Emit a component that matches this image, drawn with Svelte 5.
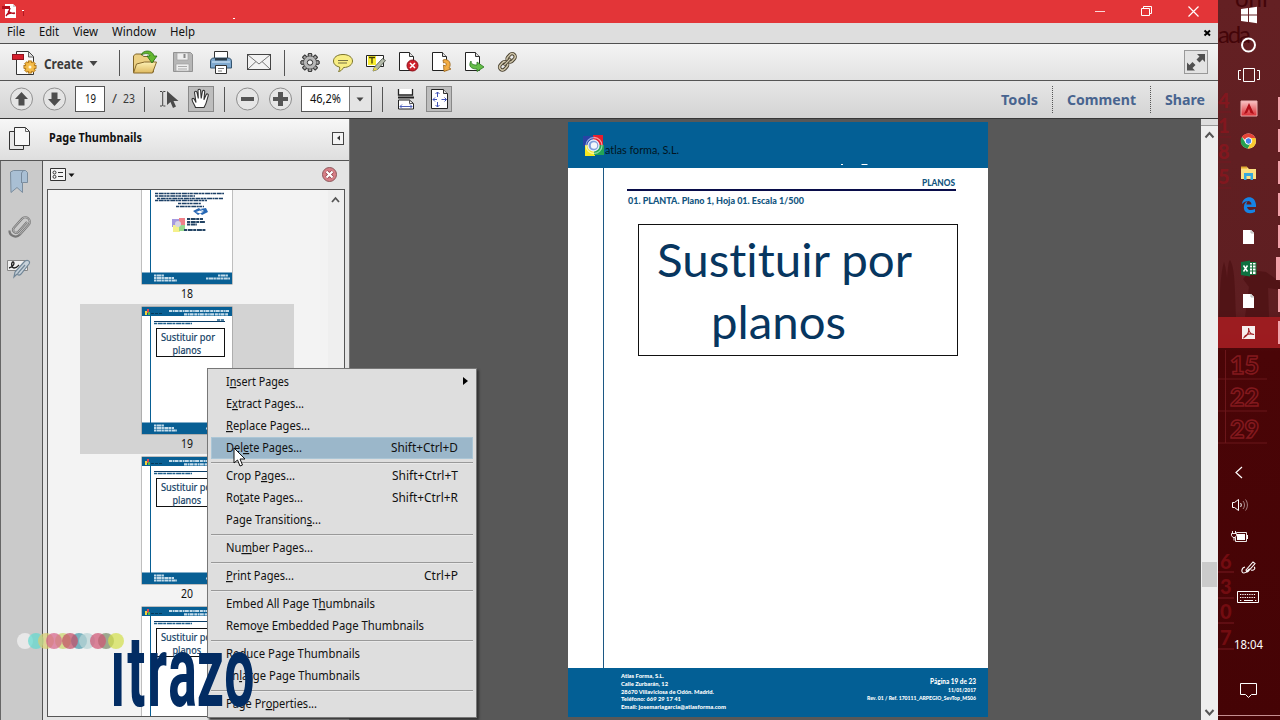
<script>
  const menus = [
    ['File', 18, 7], ['Edit', 20, 39], ['View', 25, 73], ['Window', 44, 112], ['Help', 25, 170]
  ];
  // label before / mnemonic / after, label width, shortcut, shortcut width
  const items = [
    { a: 'I', m: 'n', b: 'sert Pages', w: 63, sub: true },
    { a: 'E', m: 'x', b: 'tract Pages...', w: 78 },
    { a: '', m: 'R', b: 'eplace Pages...', w: 84 },
    { a: 'Del', m: 'e', b: 'te Pages...', w: 76, key: 'Shift+Ctrl+D', kw: 67, hot: true },
    null,
    { a: 'Crop P', m: 'a', b: 'ges...', w: 69, key: 'Shift+Ctrl+T', kw: 66 },
    { a: 'Ro', m: 't', b: 'ate Pages...', w: 77, key: 'Shift+Ctrl+R', kw: 66 },
    { a: 'Page Transition', m: 's', b: '...', w: 95 },
    null,
    { a: 'Nu', m: 'm', b: 'ber Pages...', w: 87 },
    null,
    { a: '', m: 'P', b: 'rint Pages...', w: 68, key: 'Ctrl+P', kw: 34 },
    null,
    { a: 'Embed All Page T', m: 'h', b: 'umbnails', w: 149 },
    { a: 'Remo', m: 'v', b: 'e Embedded Page Thumbnails', w: 198 },
    null,
    { a: 'Reduce Pa', m: 'g', b: 'e Thumbnails', w: 134 },
    { a: 'En', m: 'l', b: 'arge Page Thumbnails', w: 134 },
    null,
    { a: 'Page Pr', m: 'o', b: 'perties...', w: 91 }
  ];
  const dots = [
    [25, '#f4f4f4'], [63, '#c9d66b'], [36, '#62d9cf'], [46, '#d8cd70'], [54, '#d5648a'], [79, '#4a9aaa'],
    [87, '#b8d4d6'], [70, '#c44e68'], [106, '#7b8a68'], [98, '#cf5675'], [116, '#d2df4e']
  ];
  const gearTeeth = [0, 45, 90, 135, 180, 225, 270, 315];
  const ticks = [97, 129, 161, 193, 225, 257, 289, 321];
</script>

{#snippet txt(s, w, h, base, size, cls)}
  <svg class="txt {cls}" width={w} height={h}><text x="0" y={base} font-size={size} textLength={w} lengthAdjust="spacingAndGlyphs">{s}</text></svg>
{/snippet}

{#snippet thumb(n, full)}
  <div class="thumb">
    <svg width="90" height="127" viewBox="0 0 90 127">
      <rect width="90" height="127" fill="#fff" />
      {#if full}
        <rect width="90" height="9" fill="#085f94" />
        <rect x="3" y="4" width="2" height="4" fill="#f0d23c" /><rect x="5" y="2" width="2" height="4" fill="#de4853" /><rect x="6" y="5" width="2" height="3" fill="#54b848" />
        <path d="M9 6.5h12" stroke="#033a5c" stroke-dasharray="3 1" />
        <path d="M27 4h60M42 7.300h44" stroke="#c3dbe9" stroke-width="2.200" stroke-dasharray="3 .6 1.5 .4 4 .8" />
        <path d="M12 14.5h71" stroke="#0a3c66" /><path d="M75 13h7M12 16.500h38" stroke="#1a5d8b" stroke-width="1.500" stroke-dasharray="3 .7 5 .5" />
        <rect x="14.500" y="21.500" width="68" height="28" fill="#fff" stroke="#111" />
        <g fill="#103c63" stroke="#103c63" stroke-width=".2" font-family="'Noto Sans'" font-size="10.5">
          <text x="19" y="33.500" textLength="54" lengthAdjust="spacingAndGlyphs">Sustituir por</text>
          <text x="30.500" y="46.500" textLength="28.500" lengthAdjust="spacingAndGlyphs">planos</text>
        </g>
      {:else}
        <path d="M13 36.500h69M13 39h40M15 41.500h66M13 43.500h52M36 46.500h23M34 49.500h28" stroke="#1b3f66" stroke-width="1.700" stroke-dasharray="3 .7 5 .5 2 .4" />
        <path d="M51 54l6-3 4 4-5 3z" fill="#2a68b4" /><path d="M58 52l6-1 2 4-6 3-2-2 4-2z" fill="#2768b5" /><path d="M54 55l4-1.500 3 1.500-3 1.500z" fill="#fff" />
        <rect x="30" y="62" width="7" height="8" fill="#a59adf" /><rect x="37" y="61" width="6" height="7" fill="#ef8189" /><rect x="31" y="68" width="7" height="7" fill="#f5f08b" /><rect x="37" y="68" width="6" height="6" fill="#97d98e" />
        <circle cx="36" cy="67" r="3" fill="#d8d5e5" />
        <path d="M45 62h16M45 65h18M45 67.500h10M42 73h22" stroke="#244464" stroke-width="2" stroke-dasharray="3 .7 5 .5" />
      {/if}
      <path d="M8.500 {full ? 9 : 0}V116" stroke="#085f94" />
      <rect y="115.500" width="90" height="11.500" fill="#085f94" />
      <path d="M12 118.500h10M12 121h20M12 123.500h23M76 118.500h10M64 121.500h24" stroke="#c3dbe9" stroke-width="1.800" stroke-dasharray="2.500 .5 4 .4" />
    </svg>
    <div class="num">{@render txt(n, 12, 20, 14, 13, '')}</div>
  </div>
{/snippet}

<div class="screen">
  <div class="app">
    <header class="title">
      <svg width="240" height="23" viewBox="0 0 240 23">
        <path d="M5 4h8l3 3v11H5z" fill="#fff" /><path d="M13 4v3h3z" fill="#cfd0d2" />
        <rect x="2" y="6" width="8" height="3" fill="#b4101c" />
        <path d="M10 8c-.4 3-2 6-4 8M8 11c2 2 4 3 7 2M6.500 15c2-2 5-2.500 8-1.500" stroke="#b20c1a" stroke-width="1.400" fill="none" />
        <path d="M23.500 11v5" stroke="#b31824" /><path d="M22 10.500h2M233 18.500h2" stroke="#fff" />
      </svg>
      <svg width="138" height="23" viewBox="1080 0 138 23" fill="none" stroke="#fff">
        <path d="M1095 11.500h10" opacity=".8" /><path d="M1141.500 8.500h8v7h-8zM1143.500 8v-1.500h8v7h-2" /><path d="M1188.500 6.500l10 10M1198.500 6.500l-10 10" stroke-width="1.200" />
      </svg>
    </header>

    <nav class="menubar">
      <div class="menus">
        {#each menus as [name, w, x], i}
          <span style="margin-left:{i ? x - menus[i - 1][2] - menus[i - 1][1] : x}px">{@render txt(name, w, 20, 13.400, 12.500, '')}</span>
        {/each}
      </div>
      <svg width="16" height="20" viewBox="1202 23 16 20"><path d="M1204.500 30.500l5.500 5M1210 30.500l-5.500 5" stroke="#000" stroke-width="2" /></svg>
    </nav>

    <div class="bar bar1">
      <svg width="44" height="36" viewBox="0 44 44 36">
        <path d="M16.500 51.500h12l5 5v18h-17z" fill="#fbfbfb" stroke="#333" /><path d="M28.500 52v5h5" fill="#ddd" stroke="#444" stroke-width=".8" />
        <rect x="12.500" y="54.500" width="11" height="5" fill="#d6202d" stroke="#8f1420" />
        <g fill="#f0b23c" stroke="#a56b13" stroke-width=".6">{#each gearTeeth as r}<rect x="28.500" y="61" width="3" height="12" transform="rotate({r} 30 67)" />{/each}</g>
        <circle cx="30" cy="67" r="4.200" fill="#f4bc4a" /><circle cx="30" cy="67" r="1.500" fill="#fff5d8" />
      </svg>
      {@render txt('Create', 39, 36, 24.500, 13.500, 'bold grey')}
      <svg width="43" height="36" viewBox="83 44 43 36"><path d="M89.500 61h8l-4 5z" fill="#444" /><path d="M119.500 50v26" stroke="#555" /></svg>
      <svg width="38" height="36" viewBox="126 44 38 36">
        <defs><linearGradient id="fold" x2="0" y2="1"><stop stop-color="#fdf0b4" /><stop offset="1" stop-color="#dfba60" /></linearGradient></defs>
        <path d="M133.500 72V56l2-2h6l2 2.500h10V72z" fill="#ecd083" stroke="#7f6429" /><path d="M133.500 73l3-9 8-2h12l-4 11z" fill="url(#fold)" stroke="#86692c" />
        <path d="M141 55c2-5 11-6 13 1h3l-5 7-5-7h3c-1-3-5-3-9-1z" fill="#62b72f" stroke="#266b13" stroke-width=".8" />
      </svg>
      <svg width="38" height="36" viewBox="164 44 38 36">
        <path d="M173.500 52.500h17l2 2v17h-19z" fill="#b6b6b6" stroke="#929292" /><path d="M177 53h11v7h-11zM176 64h13v7h-13z" fill="#eee" stroke="#a0a0a0" stroke-width=".7" /><path d="M184.500 54v4" stroke="#888" stroke-width="2" /><path d="M178 66.500h9M178 69h9" stroke="#aaa" />
      </svg>
      <svg width="38" height="36" viewBox="202 44 38 36">
        <path d="M214.500 51.500h13v8h-13z" fill="#fff" stroke="#333" />
        <path d="M210.500 68v-6c0-3 1-4 4-4h13c3 0 4 1 4 4v6z" fill="#7fa9cf" stroke="#34546f" /><path d="M212 62h18" stroke="#bdd7ec" stroke-width="1.500" /><path d="M215 58h12v2.500h-12z" fill="#2c3c49" />
        <path d="M215.500 65.500h11v8h-11z" fill="#fff" stroke="#333" /><path d="M218 68.500h6M218 71h4" stroke="#777" />
      </svg>
      <svg width="54" height="36" viewBox="240 44 54 36">
        <rect x="247.500" y="54.500" width="23" height="15" fill="#f2f2f2" stroke="#444" /><path d="M248 55l11 9 11-9M248 69l8-7.500M270 69l-8-7.500" fill="none" stroke="#777" /><path d="M284.500 50v26" stroke="#555" />
      </svg>
      <svg width="33" height="36" viewBox="294 44 33 36">
        <g fill="#a7a7a7" stroke="#3a3a3a" stroke-width="1">{#each gearTeeth as r}<rect x="308.300" y="53.500" width="3.400" height="18" rx=".5" transform="rotate({r} 310 62.500)" />{/each}</g>
        <circle cx="310" cy="62.500" r="6.500" fill="#bbb" stroke="#4a4a4a" stroke-width=".7" /><circle cx="310" cy="62.500" r="5.300" fill="#b8b8b8" /><circle cx="310" cy="62.500" r="2.700" fill="#f4f4f4" stroke="#333" />
      </svg>
      <svg width="33" height="36" viewBox="327 44 33 36"><path d="M343 54.500c6 0 9.500 3 9.500 6.500s-3.500 6.500-9 6.500c-1 2-3 4-5 4 1-1.500 1.500-3 1-4.500-4-1-6-3-6-6 0-3.500 3.500-6.500 9.500-6.500z" fill="#f8ee84" stroke="#7c752c" /><path d="M338 60.500h10M338 63h9" stroke="#767143" /></svg>
      <svg width="33" height="36" viewBox="360 44 33 36">
        <path d="M366.500 55.500h17v11h-17z" fill="#fff" stroke="#222" /><rect x="368" y="56" width="8" height="9" fill="#f9ee30" /><path d="M369 57.500h6M372 57.500v6" stroke="#433c00" stroke-width="1.300" />
        <path d="M373 71l1.500-4 8-8.500 3 2-8 9z" fill="#b3b9a9" stroke="#444e42" stroke-width=".8" /><path d="M373 71l1.500-4 3 2.500z" fill="#ead747" />
      </svg>
      <svg width="33" height="36" viewBox="393 44 33 36">
        <path d="M399.500 52.500h10l4 4v14h-14z" fill="#fff" stroke="#222" /><path d="M409.500 52.500v4h4" fill="#ddd" stroke="#333" /><circle cx="412.500" cy="65.500" r="5.500" fill="#d0202b" stroke="#8c141d" /><path d="M410 63l5 5M415 63l-5 5" stroke="#fff" stroke-width="1.500" />
      </svg>
      <svg width="33" height="36" viewBox="426 44 33 36">
        <path d="M432.500 52.500h10l4 4v14h-14z" fill="#fff" stroke="#222" /><path d="M442.500 52.500v4h4" fill="#ddd" stroke="#333" /><path d="M443 60c6-2 9 4 6 8l2 1-7 2.500-.5-6.500 2 1c1.500-2 0-4-2-3z" fill="#f3ad43" stroke="#9a641a" stroke-width=".8" />
      </svg>
      <svg width="33" height="36" viewBox="459 44 33 36">
        <path d="M465.500 52.500h10l4 4v14h-14z" fill="#fff" stroke="#222" /><path d="M475.500 52.500v4h4" fill="#ddd" stroke="#333" /><path d="M471 61c0 3 2 4 6 4v-3l7 5-7 4.500v-2.500c-6 0-9-3-6-8z" fill="#64bd48" stroke="#287520" stroke-width=".8" />
      </svg>
      <svg width="33" height="36" viewBox="492 44 33 36">
        <g fill="none" transform="rotate(-47 507.500 62)"><g stroke="#49412f" stroke-width="3.400"><rect x="497.500" y="58.800" width="9" height="6" rx="3" /><rect x="508.500" y="58.800" width="9" height="6" rx="3" /></g><g stroke="#cfc5aa" stroke-width="1.500"><rect x="497.500" y="58.800" width="9" height="6" rx="3" /><rect x="508.500" y="58.800" width="9" height="6" rx="3" /></g><path d="M502.500 61.800h10" stroke="#4d4533" stroke-width="3" /><path d="M503 61.800h9" stroke="#d8cdb0" stroke-width="1.200" /></g>
      </svg>
      <svg class="push" width="40" height="36" viewBox="1178 44 40 36">
        <rect x="1184.500" y="50.500" width="23" height="23" fill="#e3e3e3" stroke="#999" /><path d="M1197 54h8v8l-2.500-2.500-3 3-3-3 3-3zM1187 70.500v-8l2.500 2.500 3-3 3 3-3 3 2.500 2.500z" fill="#505050" />
      </svg>
    </div>

    <div class="bar bar2">
      <svg width="75" height="35" viewBox="0 82 75 35">
        <g fill="#e4e4e4" stroke="#909090"><circle cx="21.500" cy="99" r="11" /><circle cx="54.500" cy="99" r="11" /></g>
        <path d="M21.500 92l6.500 7h-3.500v6.500h-6V99H15zM54.500 106l-6.500-7h3.500v-6.500h6V99H61z" fill="#4d4d4d" />
      </svg>
      <div class="field">{@render txt('19', 11, 24, 16.400, 12, '')}</div>
      <div class="pages">{@render txt('/', 5, 35, 21.400, 12, 'grey')}{@render txt('23', 12, 35, 21.400, 12.500, 'grey')}</div>
      <svg width="53" height="35" viewBox="135 82 53 35"><path d="M144.500 87v25" stroke="#555" /><path d="M160 91.500h2l.7.700.7-.7h2M162.700 92v13M160 106h2l.7-.7.7.7h2" stroke="#444" fill="none" /><path d="M167 91v14l3.500-3 2.500 6 3-1.500-2.500-5.500h5z" fill="#4b4b4b" /></svg>
      <div class="tool"><svg width="26" height="26" viewBox="187.500 86 26 26"><path d="M195 107.500c-1-3-3-5-3.500-8 0-1.500 2-1.500 2.500 0l1.500 3-1.500-10c0-1.700 2.200-1.700 2.500 0l1.300 6-.3-8c0-1.700 2.500-1.700 2.600 0l.6 8 1.200-7c.3-1.700 2.500-1.400 2.300.2l-.8 8 2.200-5c.7-1.500 2.600-.8 2.200.7l-2 7c-.5 2-1.500 3.500-2.300 5.100z" fill="#fff" stroke="#333" stroke-width="1.100" /></svg></div>
      <svg width="87" height="35" viewBox="214 82 87 35"><path d="M224.500 87v25" stroke="#555" /><g fill="#e6e6e6" stroke="#8c8c8c"><circle cx="247.500" cy="99" r="11" /><circle cx="280.500" cy="99" r="11" /></g><path d="M241 97h13v4h-13zM273 97h5v-5h5v5h5v4h-5v5h-5v-5h-5z" fill="#555" /></svg>
      <div class="combo">{@render txt('46,2%', 31, 24, 16.400, 12, '')}<svg width="22" height="24"><path d="M0.500 0v24" stroke="#777" /><path d="M7.500 10.500h7l-3.500 4z" fill="#444" /></svg></div>
      <svg width="54" height="35" viewBox="372 82 54 35"><path d="M382.500 87v25" stroke="#555" /><path d="M398.500 89v6h14v-6" fill="#fff" stroke="#222" stroke-width="1.300" /><path d="M398 97.500h16" stroke="#222" stroke-width="2" /><path d="M398.500 109v-9h11l4 3.500v5.500z" fill="#fff" stroke="#222" /><path d="M409.500 100v3.500h4" fill="none" stroke="#555" /><path d="M400 106.500h12M402 104.500l-2 2 2 2M410 104.500l2 2-2 2" fill="none" stroke="#4e60ba" /></svg>
      <div class="tool"><svg width="26" height="26" viewBox="426 86 26 26"><path d="M431.500 89.500h12l4 4v15h-16z" fill="#fff" stroke="#222" /><path d="M443.500 89.500v4h4" fill="#ddd" stroke="#333" /><path d="M437.500 92v5M437.500 102v5M433 99.500h4M441.500 99.500h5M435.500 94l2-2 2 2M435.500 105l2 2 2-2M435 97.500l-2 2 2 2M444.500 97.500l2 2-2 2" stroke="#4052b8" fill="none" /></svg></div>
      <div class="links">
        {@render txt('Tools', 37, 35, 23, 14.500, 'bold blue')}<i></i>
        {@render txt('Comment', 69, 35, 23, 14.500, 'bold blue')}<i></i>
        {@render txt('Share', 40, 35, 23, 14.500, 'bold blue')}
      </div>
    </div>

    <div class="body">
      <aside class="panel">
        <div class="phead">
          <svg width="49" height="41" viewBox="0 119 49 41"><path d="M9.500 131.500h14v18h-14z" fill="#e7e7e7" stroke="#333" /><path d="M14.500 127.500h11l4 4v14h-15z" fill="#f8f8f8" stroke="#333" /><path d="M25.500 127.500v4h4" fill="none" stroke="#666" /></svg>
          {@render txt('Page Thumbnails', 93, 41, 23.400, 12.500, 'bold')}
          <svg class="push" width="20" height="41" viewBox="329 119 20 41"><rect x="332.500" y="132.500" width="11" height="12" fill="#f4f4f4" stroke="#444" /><path d="M340 135.500v5l-3-2.500z" fill="#333" /></svg>
        </div>
        <div class="pbody">
          <div class="strip">
            <svg width="42" height="130" viewBox="0 161 42 130">
              <path d="M10.500 172l3-1.500h12l2 2v10h-5v10l-5.500-5-6 5z" fill="#a9bfd4" stroke="#7b8d9e" /><path d="M21.500 183v-10l2-2.500" stroke="#76899c" fill="none" />
              <g fill="none" transform="translate(19.500 226) rotate(42)"><path d="M3-8V5a3 3 0 0 1-6 0V-7a4.500 4.500 0 0 1 9 0V6a6 6 0 0 1-10.500 4" stroke="#777" stroke-width="2.200" /><path d="M3-8V5a3 3 0 0 1-6 0V-7a4.500 4.500 0 0 1 9 0V6" stroke="#c9c9c9" stroke-width=".7" /></g>
              <path d="M7.500 260.500h20v10h-20z" fill="#f0f0f0" stroke="#888" /><path d="M9 268c5-1 6-6 4-6s-2 6 1 6 4-2 5-3" stroke="#222" stroke-width="1.300" fill="none" /><path d="M17 274l-3 3 1-5 9-10c3-3 7-1 5 2l-8 10c-2 2-4 1-3-1l7-8" fill="#c8d2da" stroke="#718697" stroke-width="1.200" />
            </svg>
          </div>
          <div class="thumbs">
            <div class="ptools">
              <svg width="32" height="28" viewBox="47 161 32 28"><path d="M50.500 168.500h15v12h-15z" fill="#f5f5f5" stroke="#333" /><g fill="none" stroke="#333"><circle cx="54.500" cy="172.500" r="1.500" /><circle cx="54.500" cy="176.800" r="1.500" /><path d="M58 172.500h5M58 176.500h5" /></g><path d="M68.500 173.500h6l-3 3.500z" fill="#111" /></svg>
              <svg width="28" height="28" viewBox="317 161 28 28"><circle cx="329.500" cy="174.500" r="7" fill="#d77f86" stroke="#8c595d" /><path d="M326.500 171.500l6 6M332.500 171.500l-6 6" stroke="#8b3a42" stroke-width="3.600" /><path d="M326.500 171.500l6 6M332.500 171.500l-6 6" stroke="#fff" stroke-width="2.200" /></svg>
            </div>
            <div class="list">
              <div class="pagescol">
                <div class="slot">{@render thumb('18', false)}</div>
                <div class="slot sel">{@render thumb('19', true)}</div>
                <div class="slot">{@render thumb('20', true)}</div>
                <div class="slot last">{@render thumb('21', true)}</div>
              </div>
              <div class="lscroll"><svg width="16" height="18"><path d="M4 12l3.500-4 3.500 4" fill="none" stroke="#555" stroke-width="1.800" /></svg></div>
            </div>
          </div>
        </div>
      </aside>

      <main class="canvas">
        <article class="page">
          <header>
            <svg width="420" height="46" viewBox="568 122 420 46">
              <rect x="583" y="136" width="11" height="10" fill="#2843a5" /><rect x="593" y="135" width="10" height="10" fill="#e31e2e" /><rect x="585" y="145" width="10" height="11" fill="#f8e71f" /><rect x="594" y="145" width="10" height="10" fill="#23a455" />
              <g fill="none" stroke-width="1.300"><path d="M586 145.500a8 8 0 0 1 8-8" stroke="#8fa4de" /><path d="M594 137.500a8 8 0 0 1 8 8" stroke="#f6a2a2" /><path d="M602 145.500a8 8 0 0 1-8 8" stroke="#8cd7a0" /><path d="M594 153.500a8 8 0 0 1-8-8" stroke="#fbf6a0" /></g>
              <circle cx="593.500" cy="145.500" r="5.500" fill="#7f9edb" stroke="#e8effa" stroke-width="1.300" /><circle cx="594" cy="145.500" r="3.200" fill="#f2f5fb" />
              <text x="605" y="154" font-family="Lato" font-size="11" fill="#021521" textLength="74" lengthAdjust="spacingAndGlyphs">atlas forma, S.L.</text>
              <path d="M841 164.500h2M861.500 164.500h6" stroke="#fff" />
            </svg>
          </header>
          <div class="sheet">
            <div class="rail"></div>
            <div class="content">
              <div class="sect">{@render txt('PLANOS', 33, 21, 18.400, 9, 'cal bold')}</div>
              <div class="sub">{@render txt('01. PLANTA. Plano 1, Hoja 01. Escala 1/500', 176, 20, 13.400, 9.500, 'cal bold')}</div>
              <div class="box">
                <div class="big">{@render txt('Sustituir por', 255, 62, 52, 46, 'big')}</div>
                <div class="big two">{@render txt('planos', 135, 62, 52, 46, 'big')}</div>
              </div>
            </div>
          </div>
          <footer>
            <div>
              {@render txt('Atlas Forma, S.L.', 43, 7.800, 6, 6.300, 'foot')}
              {@render txt('Calle Zurbarán, 12', 47, 7.800, 6, 6.300, 'foot')}
              {@render txt('28670 Villaviciosa de Odón. Madrid.', 93, 7.800, 6, 6.300, 'foot')}
              {@render txt('Teléfono: 669 29 17 41', 60, 7.800, 6, 6.300, 'foot')}
              {@render txt('Email: josemariagarcia@atlasforma.com', 105, 7.800, 6, 6.300, 'foot')}
            </div>
            <div class="fr">
              {@render txt('Página 19 de 23', 46, 9, 7, 7, 'foot')}
              {@render txt('11/01/2017', 28, 7.500, 6, 6, 'foot')}
              {@render txt('Rev. 01 / Ref. 170111_ARPEGIO_SevTop_MS06', 109, 8, 5.800, 5.800, 'foot')}
            </div>
          </footer>
        </article>
      </main>
      <div class="vscroll">
        <svg width="17" height="601" viewBox="1201 119 17 601"><path d="M1201 119h17v6h-17z" fill="#dedede" /><path d="M1201 125.500h17" stroke="#999" /><path d="M1205.500 137.500l4-4.500 4 4.500M1205.500 710l4 4.500 4-4.500" fill="none" stroke="#555" stroke-width="2" /><rect x="1202" y="562" width="15" height="25" fill="#cbcbcb" /></svg>
      </div>
    </div>
  </div>

  <aside class="taskbar">
    <svg class="wall" width="62" height="720" viewBox="1218 0 62 720">
      <g fill="#430509" font-family="Lato" font-size="24"><text x="1235" y="7">oni</text><text x="1218" y="43" textLength="33">ada</text></g>
      <g fill="#94131d" opacity=".65" font-family="Lato" font-weight="900" font-size="20"><text x="1218" y="108">4</text><text x="1218" y="133">1</text><text x="1218" y="159">8</text><text x="1218" y="184">5</text></g>
      <path d="M1218 112h13M1218 137h13M1218 162h13M1218 188h13" stroke="#751920" />
      <path d="M1219 317c1-30 2-45 5-55 4 12 4 30 5 55zM1226 317c0-30 2-65 5-55 4 8 4 30 5 55zM1245 317l4-30-6-8 8-9 15 2 14 10v8l-12-2 1 29z" fill="#4c0f13" opacity=".7" />
      <g fill="none" stroke="#8d1d22" stroke-width="1.500" opacity=".85" font-family="Lato" font-weight="900" font-size="25"><text x="1230" y="374">15</text><text x="1230" y="406">22</text><text x="1230" y="438">29</text></g>
      <path d="M1225.500 350v93M1218 379h49M1218 411h49M1218 443h49" stroke="#822228" opacity=".6" />
      <g fill="#8a1117" opacity=".65" font-family="Lato" font-weight="900" font-size="20"><text x="1220" y="569">6</text><text x="1220" y="594">3</text><text x="1220" y="619">0</text><text x="1220" y="645">7</text></g>
      <path d="M1218 572h16M1218 598h16M1218 623h16M1218 649h16" stroke="#781820" />
      <rect x="1218" y="317" width="62" height="31" fill="#a01d21" opacity=".94" />
      <path d="M1218 715.500h62" stroke="#c58e90" />
      {#each ticks as y}<rect x={y === 257 ? 1276 : 1278} {y} width="4" height="23" fill="#f2a2aa" />{/each}
    </svg>
    <svg width="62" height="30" viewBox="1218 0 62 30"><path d="M1241 9l7-1v6.500h-7zM1249 8l8-1.200v7.700h-8zM1241 15.500h7V22l-7-1zM1249 15.500h8v7.700l-8-1.200z" fill="#fff" /></svg>
    <svg width="62" height="30" viewBox="1218 30 62 30"><circle cx="1248.500" cy="45" r="6.500" fill="none" stroke="#fff" stroke-width="2" /></svg>
    <svg width="62" height="33" viewBox="1218 60 62 33" fill="none" stroke="#fff"><path d="M1243.500 68.500h11v13h-11zM1241 70.500h-2.500v9h2.500M1257 70.500h2.500v9h-2.500" /></svg>
    <svg width="62" height="32" viewBox="1218 93 62 32"><defs><linearGradient id="ac" x2="0" y2="1"><stop stop-color="#fbc4c5" /><stop offset="1" stop-color="#d92b31" /></linearGradient></defs><path d="M1241 101h16v15h-16z" fill="url(#ac)" stroke="#eab0b0" /><path d="M1244 114l5-11 5 11-3.500-1-1.500-4-2 4z" fill="#b00f18" /></svg>
    <svg width="62" height="32" viewBox="1218 125 62 32"><circle cx="1248.500" cy="141" r="7.500" fill="#fff" /><path d="M1248.500 133.500a7.500 7.500 0 0 1 6.800 4.500h-6.800a3.500 3.500 0 0 0-3.200 2l-3.500-3a7.500 7.500 0 0 1 6.700-3.500z" fill="#e54436" /><path d="M1241.800 137a7.500 7.500 0 0 0 6 11.500l3-5a3.500 3.500 0 0 1-5.300-1z" fill="#26a150" /><path d="M1255.300 138a7.500 7.500 0 0 1-7.500 10.500l3.300-6a3.500 3.500 0 0 0-.6-4.500z" fill="#f9ca2f" /><circle cx="1248.500" cy="141" r="3.300" fill="#4285ef" stroke="#fff" /></svg>
    <svg width="62" height="32" viewBox="1218 157 62 32"><path d="M1241 167h6l2 2h7v10h-15z" fill="#fce082" /><path d="M1241 166.500h6v2h-6z" fill="#e3ad32" /><path d="M1244 173h9v7h-2.500v-4h-4v4h-2.500z" fill="#36a9de" /></svg>
    <svg width="62" height="32" viewBox="1218 189 62 32"><path d="M1242 204c1-8 13-10 14 1v2h-9c1 4 5 3.500 8 2v3c-7 3-12 0-11-6 .5-3 2-4 4-5-1 1-1.500 2-1.500 3.500h5c0-5-6-4.500-9.500-.5z" fill="#1683e4" /></svg>
    <svg width="62" height="32" viewBox="1218 221 62 32"><path d="M1243 230h8l3 3v11h-11z" fill="#fff" /><path d="M1251 230v3h3" stroke="#bbb" fill="#ddd" /></svg>
    <svg width="62" height="32" viewBox="1218 253 62 32"><path d="M1249 262.500h7v12h-7z" fill="#fff" stroke="#19713c" /><path d="M1249 265h7M1249 268h7M1249 271h7M1252.500 263v11" stroke="#19713c" /><path d="M1241 262l9-1.500v16l-9-1.500z" fill="#0e7140" /><path d="M1243.500 265.500l4 6M1247.500 265.500l-4 6" stroke="#fff" stroke-width="1.500" /></svg>
    <svg width="62" height="32" viewBox="1218 285 62 32"><path d="M1243 294h8l3 3v11h-11z" fill="#fff" /><path d="M1251 294v3h3" stroke="#bbb" fill="#ddd" /></svg>
    <svg width="62" height="32" viewBox="1218 317 62 32"><path d="M1242 326h13v13h-13z" fill="#f7eeee" /><path d="M1248.500 328c1 5-2 8-4.500 9.500 1-3 6-4.500 10-3-3 0-5-2.500-5.500-6.500z" fill="none" stroke="#a01d22" stroke-width="1.100" /></svg>
    <div class="gap"></div>
    <svg width="62" height="32" viewBox="1218 457 62 32"><path d="M1242 467l-6 5.500 6 5.500" fill="none" stroke="#fff" stroke-width="1.200" /></svg>
    <svg width="62" height="32" viewBox="1218 489 62 32" fill="none" stroke="#fff"><path d="M1232.500 502.500h2l4-3v11l-4-3h-2z" /><path d="M1240.500 503c1 1 1 3 0 4" /><path d="M1243 501c2 2 2 6 0 8M1245.500 499.500c2.500 3 2.500 8 0 11" opacity=".5" /></svg>
    <svg width="62" height="32" viewBox="1218 521 62 32"><path d="M1235.500 532.500h11v9h-11z" fill="none" stroke="#fff" stroke-width=".9" /><path d="M1237 534h8v6h-8z" fill="#fff" /><path d="M1247.500 535v4" stroke="#fff" /><path d="M1230.500 532.500h6v4l-2 1.500h-2l-2-1.500z" fill="#4c0508" /><path d="M1232.500 531v2.500M1235.500 531v2.500M1231.500 533.500h5v2l-1.500 2h-2l-1.500-2zM1234 537.500v3" stroke="#fff" stroke-width=".9" fill="none" /></svg>
    <svg width="62" height="30" viewBox="1218 553 62 30" fill="none" stroke="#fff"><path d="M1247 572l-1-2 7-8 2 1.500-7 8zM1245 567c-4 1-4 6-1 6 4 0 3-5 7-4M1251 570c3 1 5-2 3-3" stroke-width="1.100" /></svg>
    <svg width="62" height="30" viewBox="1218 583 62 30" fill="none" stroke="#fff"><path d="M1237.500 591.500h21v11h-21z" /><path d="M1240 594.500h16M1240 597.500h16M1240 600.500h2M1255 600.500h2" stroke-dasharray="1.300 1" /><path d="M1244 600.500h9" /></svg>
    <div class="clock">{@render txt('18:04', 29, 64, 36, 12.500, 'white')}</div>
    <svg width="62" height="43" viewBox="1218 677 62 43"><path d="M1240.500 683.500h16v11h-5l-3 3-3-3h-5z" fill="none" stroke="#fff" /></svg>
  </aside>

  <div class="ctx">
    {#each items as it}
      {#if it}
        <div class="mi" class:hot={it.hot}>
          <svg class="txt" width={it.w} height="22"><text x="0" y="15" font-size="12" textLength={it.w} lengthAdjust="spacingAndGlyphs">{it.a}<tspan text-decoration="underline">{it.m}</tspan>{it.b}</text></svg>
          {#if it.key}{@render txt(it.key, it.kw, 22, 15, 12, '')}{/if}
          {#if it.sub}<svg class="arrow" width="6" height="22"><path d="M0 6v8l5-4z" fill="#000" /></svg>{/if}
        </div>
      {:else}
        <div class="sep"></div>
      {/if}
    {/each}
  </div>

  <svg class="cursor" width="16" height="22" viewBox="0 0 16 22"><path d="M1 1v15l3.500-3 2.500 6 2.500-1-2.500-6h5z" fill="#fff" stroke="#111" /></svg>

  <svg class="brand" width="250" height="90" viewBox="10 625 250 90">
    {#each dots as [x, c]}<circle cx={x} cy="641" r="8" fill={c} opacity=".72" />{/each}
    <g transform="translate(112 706) scale(.53 1)"><text x="-3 29 67 106 160 212" y="0" font-family="Roboto" font-weight="700" font-size="101" fill="#022c63">ıtrazo</text></g>
  </svg>
</div>

<style>
  :global(body) { margin: 0; overflow: hidden; }
  .screen { position: relative; display: flex; width: 1280px; height: 720px; overflow: hidden; font-family: "Noto Sans", "Open Sans", sans-serif; font-variant-ligatures: none; }
  svg { display: block; flex: none; }
  .txt { overflow: visible; fill: #111; font-family: "Noto Sans", "Open Sans", sans-serif; }
  .bold { font-weight: 700; }
  .grey { fill: #3a3a3a; }
  .blue { fill: #48648f; }
  .white { fill: #fff; }
  .cal { font-family: Lato, sans-serif; fill: #125580; font-weight: 900; }
  .big.txt { font-family: Lato, "Open Sans", sans-serif; fill: #07365f; }
  .foot { font-family: Lato, sans-serif; fill: #fff; font-weight: 900; }
  .push { margin-left: auto; }

  .app { display: flex; flex-direction: column; width: 1218px; height: 720px; }
  .title { display: flex; justify-content: space-between; height: 23px; background: #e33538; }
  .menubar { box-sizing: border-box; display: flex; justify-content: space-between; height: 21px; background: #dedede; border-bottom: 1px solid #505050; }
  .menus { display: flex; }
  .bar { display: flex; box-sizing: border-box; }
  .bar1 { height: 37px; background: linear-gradient(#f4f4f4, #e2e2e2); border-bottom: 1px solid #555; }
  .bar2 { height: 38px; padding-top: 1px; background: linear-gradient(#e6e6e6, #d4d4d4); border-bottom: 1px solid #383838; }
  .field { box-sizing: border-box; width: 30px; height: 26px; margin-top: 4px; display: flex; justify-content: center; background: #fff; border: 1px solid #555; }
  .pages { display: flex; gap: 6px; width: 30px; padding-left: 7px; box-sizing: border-box; }
  .tool { width: 26px; height: 26px; margin-top: 4px; background: #bdbdbd; box-shadow: inset 0 0 0 1px #888; }
  .combo { box-sizing: border-box; display: flex; justify-content: space-between; width: 71px; height: 26px; margin-top: 4px; padding-left: 8px; background: linear-gradient(90deg, #fff 48px, #e4e4e4 48px); border: 1px solid #555; }
  .links { display: flex; margin-left: auto; padding-right: 13px; }
  .links i { width: 0; height: 27px; margin: 4px 14px 0; border-left: 1px dotted #555; }

  .body { display: flex; flex: 1; min-height: 0; }
  .panel { box-sizing: border-box; display: flex; flex-direction: column; width: 350px; border-left: 1px solid #666; border-right: 1px solid #777; background: #e4e4e4; }
  .phead { display: flex; height: 41px; margin-left: -1px; background: linear-gradient(#f7f7f7, #dedede); border-bottom: 1px solid #555; }
  .pbody { display: flex; flex: 1; min-height: 0; }
  .strip { width: 43px; margin-left: -1px; background: #cacaca; border-left: 1px solid #666; border-right: 1px solid #555; box-sizing: border-box; }
  .strip svg { margin-left: -1px; }
  .thumbs { display: flex; flex-direction: column; flex: 1; padding: 0 4px 2px 4px; }
  .ptools { display: flex; justify-content: space-between; width: 298px; height: 28px; }
  .list { display: flex; box-sizing: border-box; width: 298px; height: 528px; border: 1px solid #555; background: #f3f3f3; overflow: hidden; }
  .pagescol { width: 280px; padding-left: 32px; box-sizing: border-box; margin-top: -36px; }
  .slot { box-sizing: border-box; width: 214px; height: 150px; padding: 2.5px 0 0 .5px; display: flex; justify-content: center; }
  .sel { background: #d3d3d3; }
  .thumb { display: flex; flex-direction: column; align-items: center; }
  .thumb > svg:first-child { box-shadow: 0 0 0 .5px #888; }
  .num { padding-right: 1px; }
  .lscroll { width: 16px; background: #efefef; }

  .canvas { box-sizing: border-box; flex: 1; padding: 3px 0 0 218px; background: #585858; }
  .page { width: 420px; height: 595px; background: #fff; display: flex; flex-direction: column; }
  .page > header { height: 46px; background: #035f95; }
  .sheet { display: flex; flex: 1; }
  .rail { width: 35px; border-right: 1px solid #1c5884; }
  .content { padding-left: 23px; }
  .sect { width: 329px; height: 21px; display: flex; justify-content: flex-end; border-bottom: 2px solid #090d4a; }
  .sect .txt { margin-right: 1px; }
  .sub { padding-left: 1px; margin-bottom: 13px; }
  .box { box-sizing: border-box; width: 320px; height: 132px; margin-left: 11px; padding: 0 0 0 18px; border: 1px solid #111; }
  .two { padding-left: 54px; }
  footer { box-sizing: border-box; display: flex; justify-content: space-between; height: 49px; padding: 4px 12px 0 53px; background: #035f95; }
  .fr { display: flex; flex-direction: column; align-items: flex-end; padding-top: 5px; }
  .vscroll { width: 17px; background: #eee; }

  .taskbar { position: relative; display: flex; flex-direction: column; width: 62px; height: 720px; background: linear-gradient(#642023, #5e1e21 310px, #4a0507 352px, #450305); }
  .taskbar > svg { position: relative; }
  .taskbar > .wall { position: absolute; left: 0; top: 0; }
  .gap { height: 108px; }
  .clock { padding-left: 16px; position: relative; }

  .ctx { position: absolute; left: 207px; top: 368px; box-sizing: border-box; width: 270px; height: 350px; padding: 2px 3px; background: #dedede; border: 1px solid #777; box-shadow: 2px 2px 2px #333; }
  .mi { display: flex; justify-content: space-between; height: 22px; padding: 0 15px; }
  .hot { background: #9bb7ca; box-shadow: inset 0 0 0 1px #abc6d6; }
  .arrow { margin-right: -11px; }
  .sep { height: 6px; background: linear-gradient(#dedede 3px, #999 3px, #999 4px, #f4f4f4 4px, #dedede 5px); }
  .cursor { position: absolute; left: 233px; top: 447px; }
  .brand { position: absolute; left: 10px; top: 625px; }
</style>
